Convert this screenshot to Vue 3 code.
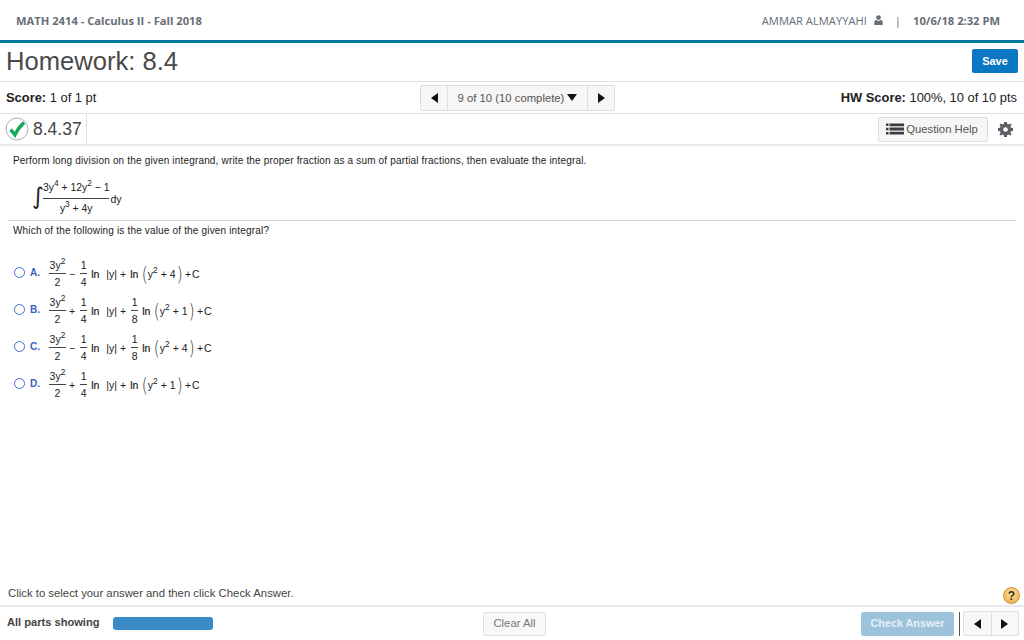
<script setup>
const options = [
  { l: 'A.', op1: '−', d2: '', inner: '4' },
  { l: 'B.', op1: '+', d2: '8', inner: '1' },
  { l: 'C.', op1: '−', d2: '8', inner: '4' },
  { l: 'D.', op1: '+', d2: '', inner: '1' }
]
</script>

<template>
  <div class="page">
    <header class="top">
      <span class="course">MATH 2414 - Calculus II - Fall 2018</span>
      <div class="user">
        <span class="name">AMMAR ALMAYYAHI</span>
        <svg class="person" width="9" height="10" viewBox="0 0 9 10"><circle cx="4.500" cy="2.600" r="2.400" fill="#666e75"/><path d="M0.300 10V7.200C0.300 5.800 1.400 5 2.600 5L4.500 6.200L6.400 5C7.600 5 8.700 5.800 8.700 7.200V10Z" fill="#666e75"/></svg>
        <span class="bar">|</span>
        <span class="date">10/6/18 2:32 PM</span>
      </div>
    </header>

    <div class="title-row">
      <h1>Homework: 8.4</h1>
      <button class="save">Save</button>
    </div>

    <div class="score-row">
      <div class="score"><b>Score:</b> 1 of 1 pt</div>
      <div class="pager">
        <span class="pg-btn"><i class="tri-l"></i></span>
        <span class="pg-mid">9 of 10 (10 complete)<i class="tri-d"></i></span>
        <span class="pg-btn"><i class="tri-r"></i></span>
      </div>
      <div class="hw"><b>HW Score:</b> 100%, 10 of 10 pts</div>
    </div>

    <div class="q-row">
      <div class="q-id">
        <svg width="24" height="24" viewBox="0 0 24 24">
          <circle cx="12" cy="12" r="11" fill="#fff" stroke="#a9adb2" stroke-width="1"/>
          <path d="M5.600 12.600L10 17.800C12.500 12.600 15 9 19.200 5.600" fill="none" stroke="#0fa958" stroke-width="3.400"/>
        </svg>
        <span>8.4.37</span>
      </div>
      <div class="q-tools">
        <button class="help">
          <svg width="18" height="12" viewBox="0 0 18 12"><path d="M0 0.500h2.500v2.500H0zM0 4.700h2.500v2.500H0zM0 9h2.500v2.500H0zM3.500 0.500H18v2.800H3.500zM3.500 4.600H18v2.800H3.500zM3.500 8.700H18v2.800H3.500z" fill="#3a3f44"/></svg>
          Question Help
        </button>
        <svg class="gear" width="15" height="15" viewBox="0 0 14 14">
          <path fill="#5b6066" fill-rule="evenodd" d="M5.700 0h2.600l.3 1.900 1.200.5L11.400 1.300l1.300 1.300-1.100 1.600.5 1.200 1.900.3v2.600l-1.900.3-.5 1.200 1.100 1.600-1.300 1.300-1.600-1.100-1.200.5-.3 1.900H5.700l-.3-1.900-1.200-.5-1.600 1.100L1.300 11.400l1.100-1.600-.5-1.200L0 8.300V5.700l1.900-.3.5-1.200L1.300 2.600l1.300-1.300 1.600 1.100 1.200-.5zM7 4.800a2.200 2.200 0 1 0 0 4.400a2.200 2.200 0 0 0 0-4.400z"/>
        </svg>
      </div>
    </div>

    <main class="content">
      <p class="q-text">Perform long division on the given integrand, write the proper fraction as a sum of partial fractions, then evaluate the integral.</p>
      <div class="integral">
        <span class="int-sign">∫</span>
        <span class="frac big">
          <span class="num">3y<sup>4</sup> + 12y<sup>2</sup> − 1</span>
          <span class="den">y<sup>3</sup> + 4y</span>
        </span>
        <span class="dy">dy</span>
      </div>
      <div class="divider"></div>
      <p class="q-which">Which of the following is the value of the given integral?</p>

      <ul class="options">
        <li v-for="o in options" :key="o.l" class="opt">
          <span class="radio"></span>
          <span class="letter">{{ o.l }}</span>
          <span class="frac"><span class="num">3y<sup>2</sup></span><span class="den">2</span></span>
          <span class="op">{{ o.op1 }}</span>
          <span class="frac small"><span class="num">1</span><span class="den">4</span></span>
          <span class="ln">ln</span>
          <span class="abs">|y|</span>
          <span class="op plus">+</span>
          <span v-if="o.d2" class="frac small"><span class="num">1</span><span class="den">{{ o.d2 }}</span></span>
          <span class="ln">ln</span>
          <span class="paren">(</span>
          <span class="inner">y<sup>2</sup> + {{ o.inner }}</span>
          <span class="paren">)</span>
          <span class="tail">+ C</span>
        </li>
      </ul>
    </main>

    <div class="hint-row">
      <span>Click to select your answer and then click Check Answer.</span>
      <span class="q-badge">?</span>
    </div>

    <footer class="foot">
      <div class="foot-left">
        <b>All parts showing</b>
        <span class="progress"></span>
      </div>
      <button class="clear">Clear All</button>
      <div class="foot-right">
        <button class="check">Check Answer</button>
        <span class="sep"></span>
        <div class="mini">
          <span><i class="tri-l"></i></span>
          <span><i class="tri-r"></i></span>
        </div>
      </div>
    </footer>
  </div>
</template>

<style scoped>
.page {
  width: 1024px;
  height: 640px;
  display: flex;
  flex-direction: column;
  overflow: hidden;
  background: #fff;
  font-family: "Liberation Sans", Arial, sans-serif;
  color: #222;
}
.top {
  height: 40px;
  flex: none;
  box-sizing: border-box;
  padding: 0 24px 0 16px;
  display: flex;
  align-items: center;
  justify-content: space-between;
  color: #666e75;
  font-family: "Open Sans", sans-serif;
  font-size: 11.2px;
}
.course { font-weight: 700; }
.user { display: flex; align-items: center; }
.person { margin-left: 7px; }
.bar { margin: 0 12px 0 12px; }
.date { font-weight: 700; }
.title-row {
  height: 36px;
  padding: 0 6px 2px;
  flex: none;
  border-top: 3px solid #007a9b;
  border-bottom: 1px solid #dde1e7;
  display: flex;
  align-items: center;
  justify-content: space-between;
}
h1 {
  margin: 0;
  font-size: 25.600px;
  font-weight: 400;
  color: #4a4a4a;
}
.save {
  width: 46px;
  height: 24px;
  border: 0;
  border-radius: 2px;
  background: #0a77c2;
  color: #fff;
  font: 700 11px "Liberation Sans", sans-serif;
  padding: 0;
}
.score-row {
  height: 31px;
  flex: none;
  border-bottom: 1px solid #dde1e7;
  display: grid;
  grid-template-columns: 1fr auto 1fr;
  align-items: center;
  padding: 0 7px 0 6px;
  font-size: 12.900px;
}
.hw { text-align: right; }
.pager {
  display: flex;
  height: 24px;
  border: 1px solid #dcdfe3;
  border-radius: 2px;
  background: #f6f6f6;
  margin-left: 12px;
}
.pg-btn {
  width: 26px;
  display: flex;
  align-items: center;
  justify-content: center;
}
.pg-mid {
  width: 139px;
  border: solid #dcdfe3;
  border-width: 0 1px;
  display: flex;
  align-items: center;
  justify-content: center;
  font-size: 11.300px;
  color: #555;
}
.tri-l, .tri-r, .tri-d { display: block; width: 0; height: 0; }
.tri-l { border: 5px solid transparent; border-left-width: 0; border-right: 7px solid #111; }
.tri-r { border: 5px solid transparent; border-right-width: 0; border-left: 7px solid #111; }
.tri-d { border: solid transparent; border-width: 7px 5.500px 0; border-top-color: #111; margin-left: 3px; }
.q-row {
  height: 32px;
  flex: none;
  box-sizing: border-box;
  border-bottom: 2px solid #e8e9ee;
  display: flex;
  justify-content: space-between;
  align-items: stretch;
  padding-left: 5px;
}
.q-id {
  display: flex;
  align-items: center;
  gap: 4px;
  width: 81px;
  border-right: 1px solid #dde1e7;
  font-size: 17.500px;
  color: #444;
}
.q-tools {
  display: flex;
  align-items: center;
  padding-right: 11px;
  gap: 10px;
}
.help {
  width: 110px;
  height: 25px;
  padding: 0 2px 0 0;
  border: 1px solid #dcdfe3;
  border-radius: 2px;
  background: #f6f6f6;
  color: #555;
  font: 11.300px "Liberation Sans", sans-serif;
  display: flex;
  align-items: center;
  justify-content: center;
  gap: 2px;
}
.content {
  flex: 1;
  min-height: 0;
  padding: 9px 8px 0;
  font-size: 10px;
  color: #222;
}
p { margin: 0; }
.q-text { padding-left: 5px; line-height: 12px; letter-spacing: 0.17px; }
.integral {
  display: flex;
  align-items: center;
  height: 43px;
  margin-top: 10px;
  padding-left: 24px;
}
.int-sign {
  font: 23px "DejaVu Sans", sans-serif;
  width: 11px;
  flex: none;
  line-height: 34px;
  margin-top: -6px;
}
.frac {
  display: inline-flex;
  flex-direction: column;
  align-items: center;
  text-align: center;
  line-height: 1;
}
.frac .num { border-bottom: 1px solid #444; padding: 0 1px 2px; white-space: nowrap; }
.frac .den { padding-top: 2px; }
.big { font-size: 10.400px; }
.big .num { padding: 0 0 4px; }
.big .den { padding-top: 5px; }
.dy { margin-left: 1px; font-size: 10.500px; }
sup { font-size: 0.8em; line-height: 0; vertical-align: 0.6em; }
.divider {
  height: 1px;
  background: #d3d7dc;
}
.q-which { padding-left: 5px; margin-top: 4px; line-height: 12px; letter-spacing: 0.17px; }
.options { list-style: none; margin: 18px 0 0; padding: 0 0 0 6px; }
.opt {
  display: flex;
  align-items: center;
  height: 37px;
  font-size: 10px;
}
.radio {
  width: 9px;
  height: 9px;
  border: 1px solid #3f6fd0;
  border-radius: 50%;
  flex: none;
  margin-right: 5px;
  margin-top: -3px;
  box-sizing: content-box;
}
.letter {
  width: 19px;
  flex: none;
  color: #3a5fc4;
  font-weight: 700;
  margin-top: -3px;
}
.opt .frac { font-size: 10.500px; }
.opt .frac .num { min-width: 17px; padding: 0 0 3px; }
.opt .frac .den { padding-top: 3px; }
.opt .small .num { min-width: 7px; }
.op { margin: 0 5px 0 3px; font-size: 10.500px; }
.ln { font-weight: 400; margin: 0 0 0 4px; font-size: 10.500px; -webkit-text-stroke: 0.2px #222; }
.abs { margin: 0 3px 0 7px; font-size: 10.500px; }
.op.plus { margin: 0; }
.plus + .frac { margin-left: 5px; }
.paren { font: 300 19px "DejaVu Sans", sans-serif; margin: 0 -1px 0 3px; color: #333; transform: scaleX(0.8); }
.inner { white-space: pre; font-size: 10.500px; }
.inner + .paren { margin: 0; }
.tail { margin-left: 2px; white-space: pre; font-size: 10.500px; word-spacing: -2px; }
.hint-row {
  height: 27px;
  flex: none;
  box-sizing: border-box;
  display: flex;
  align-items: center;
  justify-content: space-between;
  padding: 0 4px 0 8px;
  font-size: 11.350px;
  color: #444;
  border-bottom: 2px solid #e8e9ee;
}
.q-badge {
  width: 15px;
  height: 15px;
  border-radius: 50%;
  background: radial-gradient(circle at 50% 35%, #fde0a0, #eda93a);
  border: 1px solid #c98f35;
  color: #333;
  font-weight: 700;
  font-size: 12px;
  display: flex;
  align-items: center;
  justify-content: center;
  margin-top: 6px;
}
.foot {
  height: 33px;
  flex: none;
  display: grid;
  grid-template-columns: 1fr auto 1fr;
  align-items: center;
  padding: 0 5px 0 7px;
}
.foot-left { display: flex; align-items: center; gap: 13px; font-size: 11.100px; color: #444; }
.foot-left b { margin-top: -3px; }
.progress { width: 100px; height: 13px; border-radius: 3px; background: #3a8bc8; margin-left: 1px; }
.clear {
  width: 63px;
  height: 24px;
  padding: 0 0 1px;
  margin-left: 3px;
  border: 1px solid #dcdfe3;
  border-radius: 2px;
  background: #f8f8f8;
  color: #777;
  font: 11.300px "Liberation Sans", sans-serif;
}
.foot-right { display: flex; align-items: center; justify-content: flex-end; }
.check {
  width: 93px;
  height: 24px;
  padding: 0 0 1px;
  border: 0;
  border-radius: 2px;
  background: #9dc3dc;
  color: #e6f0f6;
  font: 700 10.800px "Liberation Sans", sans-serif;
}
.sep { width: 1px; height: 24px; background: #555; margin: 0 3px 0 5px; }
.mini {
  display: flex;
  width: 54px;
  height: 23px;
  border: 1px solid #dcdfe3;
  border-radius: 2px;
  background: #f8f8f8;
}
.mini span { flex: 1; display: flex; align-items: center; justify-content: center; }
.mini span + span { border-left: 1px solid #dcdfe3; }
</style>
